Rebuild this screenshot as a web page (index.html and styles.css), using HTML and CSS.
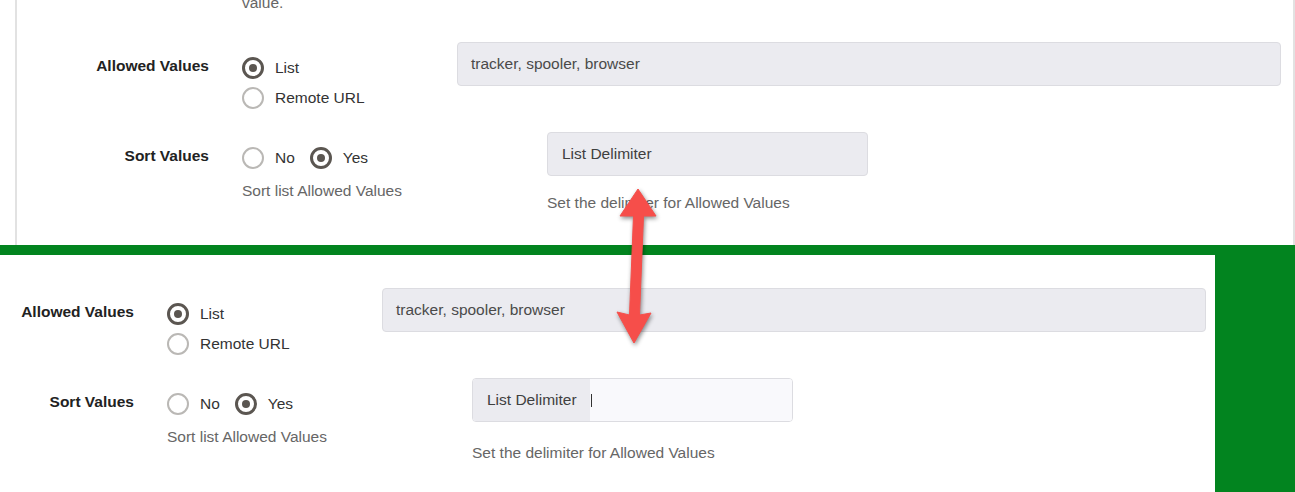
FILE: index.html
```html
<!DOCTYPE html>
<html lang="en">
<head>
<meta charset="utf-8">
<title>Allowed Values settings</title>
<link rel="stylesheet" href="styles.css">
</head>
<body>
<div class="page">
  <section class="shot shot-top">
    <div class="panel">
      <p class="help help-lead">value.</p>
      <div class="row">
        <div class="label">Allowed Values</div>
        <div class="options options-allowed">
          <div class="radio"><span class="dot on"></span>List</div>
          <div class="radio"><span class="dot"></span>Remote URL</div>
        </div>
        <div class="field field-wide">
          <div class="input input-value">tracker, spooler, browser</div>
        </div>
      </div>
      <div class="row">
        <div class="label">Sort Values</div>
        <div class="options options-sort">
          <div class="radio-line">
            <div class="radio"><span class="dot"></span>No</div>
            <div class="radio"><span class="dot on"></span>Yes</div>
          </div>
          <p class="help">Sort list Allowed Values</p>
        </div>
        <div class="field field-delim">
          <div class="input input-placeholder">List Delimiter</div>
          <p class="help">Set the delimiter for Allowed Values</p>
        </div>
      </div>
    </div>
  </section>

  <section class="shot shot-bottom">
    <div class="row">
      <div class="label">Allowed Values</div>
      <div class="options options-allowed">
        <div class="radio"><span class="dot on"></span>List</div>
        <div class="radio"><span class="dot"></span>Remote URL</div>
      </div>
      <div class="field field-wide">
        <div class="input input-value">tracker, spooler, browser</div>
      </div>
    </div>
    <div class="row">
      <div class="label">Sort Values</div>
      <div class="options options-sort">
        <div class="radio-line">
          <div class="radio"><span class="dot"></span>No</div>
          <div class="radio"><span class="dot on"></span>Yes</div>
        </div>
        <p class="help">Sort list Allowed Values</p>
      </div>
      <div class="field field-delim">
        <div class="input-group">
          <span class="addon">List Delimiter</span>
          <span class="control"><span class="caret"></span></span>
        </div>
        <p class="help">Set the delimiter for Allowed Values</p>
      </div>
    </div>
  </section>

  <svg class="arrow" width="1295" height="492" viewBox="0 0 1295 492" aria-hidden="true">
    <polygon points="638,189 656,216 643.5,216 639.5,315 651,313 634,343 617,312 629.5,315 633.5,216 620,216" />
  </svg>
</div>
</body>
</html>
```

FILE: styles.css
```css
* {
  box-sizing: border-box;
}

html,
body {
  margin: 0;
  padding: 0;
}

body {
  width: 1295px;
  height: 492px;
  overflow: hidden;
  background: #02841f;
  font-family: "Liberation Sans", Arial, sans-serif;
  font-size: 15.5px;
  line-height: 20px;
  color: #333;
}

.page {
  position: relative;
  width: 1295px;
  height: 492px;
}

.shot-top {
  height: 245px;
  background: #fff;
  overflow: hidden;
  padding-left: 15px;
}

.panel {
  display: flow-root;
  height: 100%;
  border-left: 2px solid #e2e2e2;
  border-right: 2px solid #e2e2e2;
  padding-left: 72px;
}

.shot-bottom {
  margin-top: 10px;
  width: 1215px;
  height: 237px;
  background: #fff;
  overflow: hidden;
  padding: 33px 0 0 14px;
}

.help {
  margin: 0;
  color: #666;
}

.help-lead {
  margin: -7px 0 29px 153px;
}

.row {
  display: flex;
  align-items: flex-start;
}

.row + .row {
  margin-top: 19px;
}

.label {
  width: 120px;
  margin-right: 33px;
  padding-top: 14px;
  text-align: right;
  font-weight: bold;
  color: #222;
  flex: none;
}

.options {
  padding-top: 11px;
  flex: none;
}

.options-allowed {
  width: 215px;
}

.options-sort {
  width: 305px;
}

.radio {
  display: flex;
  align-items: center;
  gap: 11px;
  height: 30px;
  color: #333;
}

.radio-line {
  display: flex;
  gap: 15px;
}

.dot {
  flex: none;
  width: 22px;
  height: 22px;
  border-radius: 50%;
  border: 2px solid #bab8b5;
  background: #fff;
}

.dot.on {
  border: 3px solid #5b5651;
  display: flex;
  align-items: center;
  justify-content: center;
}

.dot.on::after {
  content: "";
  width: 8px;
  height: 8px;
  border-radius: 50%;
  background: #5b5651;
}

.options .help {
  margin-top: 8px;
}

.field {
  flex: none;
}

.field-wide {
  width: 824px;
}

.field-delim {
  width: 321px;
}

.input {
  display: flex;
  align-items: center;
  height: 44px;
  padding: 0 14px;
  background: #ebebf0;
  border: 1px solid #dcdce1;
  border-radius: 4px;
}

.input-value {
  padding-left: 13px;
  color: #4a4a4a;
}

.input-placeholder {
  color: #3f3f3f;
}

.field-delim .help {
  margin-top: 17px;
}

.shot-bottom .field-delim .help {
  margin-top: 21px;
}

.input-group {
  display: flex;
  height: 44px;
  border: 1px solid #dcdce1;
  border-radius: 4px;
  overflow: hidden;
}

.addon {
  display: flex;
  align-items: center;
  padding: 0 13px 0 14px;
  background: #ebebf0;
  color: #3f3f3f;
}

.control {
  flex: 1;
  display: flex;
  align-items: center;
  padding-left: 1px;
  background: #f9f9fc;
}

.caret {
  width: 1px;
  height: 13px;
  background: #333;
}

.arrow {
  position: absolute;
  top: 0;
  left: 0;
  pointer-events: none;
  overflow: visible;
  filter: drop-shadow(1px 2px 2px rgba(0, 0, 0, 0.45));
}

.arrow polygon {
  fill: #f64e4a;
  stroke: #f64e4a;
  stroke-width: 1;
  stroke-linejoin: round;
}
```
